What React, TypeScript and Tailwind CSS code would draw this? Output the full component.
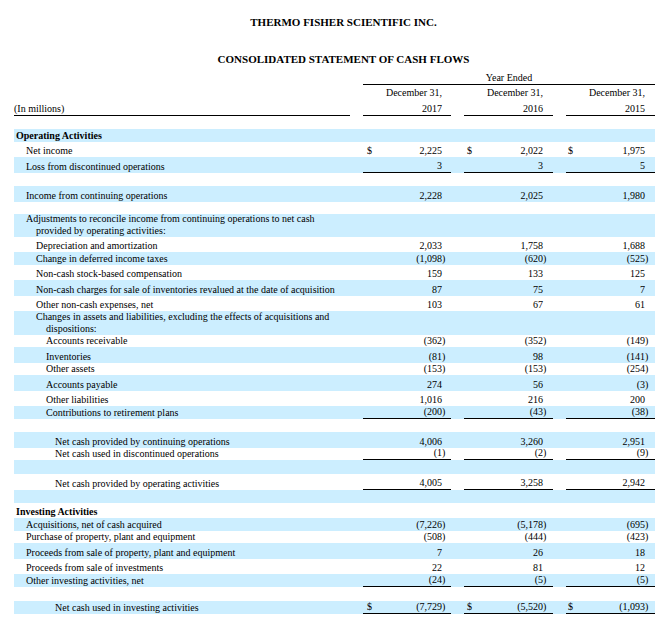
import React from "react";

type Row = {
  label?: string;
  label2?: string;
  indent: number;
  bold?: boolean;
  v?: [string, string, string];
  dollar?: boolean;
  ul?: boolean;
  h: number;
  blue: boolean;
};

const rows: Row[] = [
  { label: "Operating Activities", indent: 2, bold: true, h: 13, blue: true },
  { label: "Net income", indent: 12, v: ["2,225", "2,022", "1,975"], dollar: true, h: 15, blue: false },
  { label: "Loss from discontinued operations", indent: 12, v: ["3", "3", "5"], ul: true, h: 16, blue: true },
  { indent: 0, h: 13, blue: false },
  { label: "Income from continuing operations", indent: 12, v: ["2,228", "2,025", "1,980"], h: 16, blue: true },
  { indent: 0, h: 12, blue: false },
  {
    label: "Adjustments to reconcile income from continuing operations to net cash",
    label2: "provided by operating activities:",
    indent: 12,
    h: 23,
    blue: true,
  },
  { label: "Depreciation and amortization", indent: 22, v: ["2,033", "1,758", "1,688"], h: 15, blue: false },
  { label: "Change in deferred income taxes", indent: 22, v: ["(1,098)", "(620)", "(525)"], h: 13, blue: true },
  { label: "Non-cash stock-based compensation", indent: 22, v: ["159", "133", "125"], h: 15, blue: false },
  {
    label: "Non-cash charges for sale of inventories revalued at the date of acquisition",
    indent: 22,
    v: ["87", "75", "7"],
    h: 16,
    blue: true,
  },
  { label: "Other non-cash expenses, net", indent: 22, v: ["103", "67", "61"], h: 15, blue: false },
  {
    label: "Changes in assets and liabilities, excluding the effects of acquisitions and",
    label2: "dispositions:",
    indent: 22,
    h: 24,
    blue: true,
  },
  { label: "Accounts receivable", indent: 32, v: ["(362)", "(352)", "(149)"], h: 12, blue: false },
  { label: "Inventories", indent: 32, v: ["(81)", "98", "(141)"], h: 16, blue: true },
  { label: "Other assets", indent: 32, v: ["(153)", "(153)", "(254)"], h: 12, blue: false },
  { label: "Accounts payable", indent: 32, v: ["274", "56", "(3)"], h: 16, blue: true },
  { label: "Other liabilities", indent: 32, v: ["1,016", "216", "200"], h: 15, blue: false },
  { label: "Contributions to retirement plans", indent: 32, v: ["(200)", "(43)", "(38)"], ul: true, h: 13, blue: true },
  { indent: 0, h: 13, blue: false },
  { label: "Net cash provided by continuing operations", indent: 41, v: ["4,006", "3,260", "2,951"], h: 16, blue: true },
  { label: "Net cash used in discontinued operations", indent: 41, v: ["(1)", "(2)", "(9)"], ul: true, h: 12, blue: false },
  { indent: 0, h: 14, blue: true },
  { label: "Net cash provided by operating activities", indent: 41, v: ["4,005", "3,258", "2,942"], ul: true, h: 16, blue: false },
  { indent: 0, h: 13, blue: true },
  { label: "Investing Activities", indent: 2, bold: true, h: 15, blue: false },
  { label: "Acquisitions, net of cash acquired", indent: 12, v: ["(7,226)", "(5,178)", "(695)"], h: 13, blue: true },
  { label: "Purchase of property, plant and equipment", indent: 12, v: ["(508)", "(444)", "(423)"], h: 12, blue: false },
  { label: "Proceeds from sale of property, plant and equipment", indent: 12, v: ["7", "26", "18"], h: 16, blue: true },
  { label: "Proceeds from sale of investments", indent: 12, v: ["22", "81", "12"], h: 15, blue: false },
  { label: "Other investing activities, net", indent: 12, v: ["(24)", "(5)", "(5)"], ul: true, h: 13, blue: true },
  { indent: 0, h: 14, blue: false },
  {
    label: "Net cash used in investing activities",
    indent: 41,
    v: ["(7,729)", "(5,520)", "(1,093)"],
    dollar: true,
    ul: true,
    h: 13,
    blue: true,
  },
];

const colW = ["w-[88px]", "w-[89px]", "w-[89px]"];
const colPr = ["pr-[5px]", "pr-[6px]", "pr-[6px]"];
const colPl = ["pl-[4px]", "pl-[3px]", "pl-[2px]"];

function Val({ v, i, dollar, ul }: { v: string; i: number; dollar?: boolean; ul?: boolean }) {
  const paren = v.endsWith(")");
  const num = paren ? v.slice(0, -1) : v;
  return (
    <div
      className={`ml-[13px] ${colW[i]} flex items-end justify-between ${ul ? "border-b border-black" : ""}`}
    >
      <span className={colPl[i]}>{dollar ? "$" : ""}</span>
      <span className={`flex ${colPr[i]}`}>
        <span>{num}</span>
        <span className="w-[4px]">{paren ? ")" : ""}</span>
      </span>
    </div>
  );
}

function indentClass(n: number) {
  switch (n) {
    case 2:
      return "pl-[2px]";
    case 12:
      return "pl-[12px]";
    case 22:
      return "pl-[22px]";
    case 32:
      return "pl-[32px]";
    case 41:
      return "pl-[41px]";
    default:
      return "";
  }
}
function indentClass2(n: number) {
  switch (n) {
    case 12:
      return "pl-[22px]";
    case 22:
      return "pl-[32px]";
    default:
      return "";
  }
}

const hClass: Record<number, string> = {
  12: "h-[12px]",
  13: "h-[13px]",
  14: "h-[14px]",
  15: "h-[15px]",
  16: "h-[16px]",
  23: "h-[23px]",
  24: "h-[24px]",
};

export default function App() {
  return (
    <div className="w-[667px] h-[624px] bg-white text-black font-['Liberation_Serif',serif] overflow-hidden">
      <div className="ml-[14px] w-[641px]">
        <div className="h-[15px]" />
        <div className="h-[14px] leading-[14px] text-[11px] font-bold text-center pl-[18px] whitespace-nowrap">
          THERMO FISHER SCIENTIFIC INC.
        </div>
        <div className="h-[23px]" />
        <div className="h-[14px] leading-[14px] text-[11px] font-bold text-center pl-[18px] whitespace-nowrap">
          CONSOLIDATED STATEMENT OF CASH FLOWS
        </div>
        <div className="h-[6px]" />
        <div className="flex text-[10px] leading-[12px]">
          <div className="w-[349px]" />
          <div className="w-[292px] border-b border-black text-center">Year Ended</div>
        </div>
        <div className="flex items-end text-[10px] leading-[12px]">
          <div className="w-[336px] border-b border-black">(In millions)</div>
          {["2017", "2016", "2015"].map((y, i) => (
            <div
              key={y}
              className={`ml-[13px] ${colW[i]} border-b border-black text-right pt-[2px] ${
                i === 0 ? "pr-[9px]" : "pr-[10px]"
              }`}
            >
              <div>December 31,</div>
              <div className="mt-[4px]">{y}</div>
            </div>
          ))}
        </div>
        <div className="h-[13px]" />
        {rows.map((r, idx) => (
          <div
            key={idx}
            className={`flex ${hClass[r.h]} text-[10px] leading-[12px] ${r.blue ? "bg-[#cceeff]" : ""}`}
          >
            <div
              className={`w-[336px] flex flex-col justify-end whitespace-nowrap ${r.bold ? "font-bold" : ""}`}
            >
              {r.label && <div className={indentClass(r.indent)}>{r.label}</div>}
              {r.label2 && <div className={indentClass2(r.indent)}>{r.label2}</div>}
            </div>
            {r.v &&
              r.v.map((v, i) => <Val key={i} v={v} i={i} dollar={r.dollar} ul={r.ul} />)}
          </div>
        ))}
      </div>
    </div>
  );
}
